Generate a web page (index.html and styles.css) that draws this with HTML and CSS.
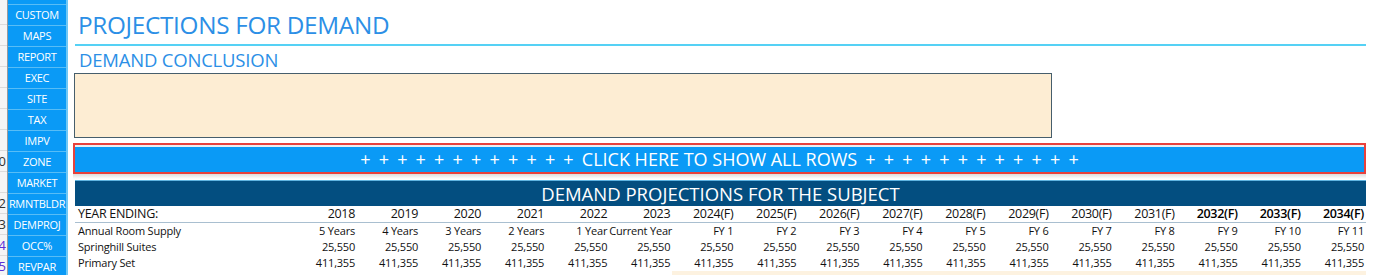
FILE: index.html
```html
<!DOCTYPE html>
<html lang="en">
<head>
    <meta charset="UTF-8">
    <title>Projections for Demand</title>
    <link rel="stylesheet" href="styles.css">
</head>
<body>
    <div class="page">
        <!-- sheet edge on the left -->
        <div class="gutter">
            <div class="cell"></div>
            <div class="cell"></div>
            <div class="cell"></div>
            <div class="cell"></div>
            <div class="cell"></div>
            <div class="cell"></div>
            <div class="cell"></div>
            <div class="cell dark">0</div>
            <div class="cell"></div>
            <div class="cell dark">2</div>
            <div class="cell dark">3</div>
            <div class="cell purple">4</div>
            <div class="cell purple">5</div>
        </div>

        <!-- nav buttons -->
        <nav class="sidebar">
            <a class="btn stub" href="javascript:;"></a>
            <a class="btn" href="javascript:;">CUSTOM</a>
            <a class="btn" href="javascript:;">MAPS</a>
            <a class="btn" href="javascript:;">REPORT</a>
            <a class="btn" href="javascript:;">EXEC</a>
            <a class="btn" href="javascript:;">SITE</a>
            <a class="btn" href="javascript:;">TAX</a>
            <a class="btn" href="javascript:;">IMPV</a>
            <a class="btn" href="javascript:;">ZONE</a>
            <a class="btn" href="javascript:;">MARKET</a>
            <a class="btn" href="javascript:;">RMNTBLDR</a>
            <a class="btn" href="javascript:;">DEMPROJ</a>
            <a class="btn" href="javascript:;">OCC%</a>
            <a class="btn" href="javascript:;">REVPAR</a>
        </nav>

        <main class="content">
            <h1 class="title">PROJECTIONS FOR DEMAND</h1>
            <h2 class="subtitle">DEMAND CONCLUSION</h2>
            <div class="conclusion"></div>

            <div class="show-rows">
                <a class="show-btn" href="javascript:;"><span class="plus">+ + + + + + + + + + + + </span>CLICK HERE TO SHOW ALL ROWS<span class="plus"> + + + + + + + + + + + +</span></a>
            </div>

            <div class="proj-head">DEMAND PROJECTIONS FOR THE SUBJECT</div>
            <table class="proj">
                <thead>
                    <tr>
                        <th class="label">YEAR ENDING:</th>
                        <th>2018</th><th>2019</th><th>2020</th><th>2021</th><th>2022</th><th>2023</th>
                        <th>2024(F)</th><th>2025(F)</th><th>2026(F)</th><th>2027(F)</th><th>2028(F)</th>
                        <th>2029(F)</th><th>2030(F)</th><th>2031(F)</th>
                        <th class="strong">2032(F)</th><th class="strong">2033(F)</th><th class="strong">2034(F)</th>
                    </tr>
                </thead>
                <tbody>
                    <tr>
                        <td class="label">Annual Room Supply</td>
                        <td>5 Years</td><td>4 Years</td><td>3 Years</td><td>2 Years</td><td>1 Year</td><td>Current Year</td>
                        <td>FY 1</td><td>FY 2</td><td>FY 3</td><td>FY 4</td><td>FY 5</td><td>FY 6</td>
                        <td>FY 7</td><td>FY 8</td><td>FY 9</td><td>FY 10</td><td>FY 11</td>
                    </tr>
                    <tr>
                        <td class="label">Springhill Suites</td>
                        <td>25,550</td><td>25,550</td><td>25,550</td><td>25,550</td><td>25,550</td><td>25,550</td>
                        <td>25,550</td><td>25,550</td><td>25,550</td><td>25,550</td><td>25,550</td><td>25,550</td>
                        <td>25,550</td><td>25,550</td><td>25,550</td><td>25,550</td><td>25,550</td>
                    </tr>
                    <tr>
                        <td class="label">Primary Set</td>
                        <td>411,355</td><td>411,355</td><td>411,355</td><td>411,355</td><td>411,355</td><td>411,355</td>
                        <td>411,355</td><td>411,355</td><td>411,355</td><td>411,355</td><td>411,355</td><td>411,355</td>
                        <td>411,355</td><td>411,355</td><td>411,355</td><td>411,355</td><td>411,355</td>
                    </tr>
                    <tr class="peach">
                        <td class="label"></td>
                        <td></td><td></td><td></td><td></td><td></td><td></td>
                        <td class="fill"></td><td class="fill"></td><td class="fill"></td><td class="fill"></td><td class="fill"></td><td class="fill"></td>
                        <td class="fill"></td><td class="fill"></td><td class="fill"></td><td class="fill"></td><td class="fill"></td>
                    </tr>
                </tbody>
            </table>
        </main>
    </div>
</body>
</html>
```

FILE: styles.css
```css
*{
    margin: 0;
    padding: 0;
    box-sizing: border-box;
}
body{
    background-color: #fff;
    font-family: "Open Sans", "Noto Sans", sans-serif;
    overflow: hidden;
}
.page{
    display: flex;
    height: 275px;
    overflow: hidden;
}

/* left sheet edge */
.gutter{
    width: 8px;
    flex-shrink: 0;
    background-color: #f5f5f5;
    border-right: 1px solid #9a9a9a;
    overflow: hidden;
    padding-top: 4px;
}
.gutter .cell{
    height: 21px;
    border-bottom: 1px solid #dcdcdc;
    font-size: 13px;
    line-height: 20px;
    text-align: right;
    direction: rtl;
    padding-right: 1px;
    color: #333;
}
.gutter .purple{
    color: #5a2fd6;
}

/* nav */
.sidebar{
    width: 60px;
    flex-shrink: 0;
    background-color: #0a9af6;
    border-right: 2px solid #6fc8f6;
    display: flex;
    flex-direction: column;
}
.btn{
    display: block;
    height: 21px;
    border-top: 1px solid #58bdf6;
    color: #fff;
    font-size: 11px;
    line-height: 20px;
    text-align: center;
    text-decoration: none;
    white-space: nowrap;
    letter-spacing: -0.3px;
    flex-shrink: 0;
}
.btn.stub{
    height: 4px;
    border-top: none;
}

/* main area */
.content{
    flex: 1;
    padding: 0 8px 0 5px;
    min-width: 0;
}
.title{
    height: 46px;
    padding: 9px 0 0 3px;
    font-size: 24.3px;
    font-weight: 400;
    line-height: 32px;
    color: #2c8fe6;
    letter-spacing: -0.3px;
    border-bottom: 2px solid #55d1f5;
    margin-left: 2px;
}
.subtitle{
    height: 27px;
    padding: 2px 0 0 6px;
    font-size: 18.5px;
    font-weight: 400;
    line-height: 23px;
    color: #2c8fe6;
    letter-spacing: -0.2px;
}
.conclusion{
    width: 978px;
    height: 65px;
    margin-left: 1px;
    background-color: #fdedd3;
    border: 1px solid #465e6c;
}

.show-rows{
    margin-top: 5px;
    height: 36px;
    padding-bottom: 4px;
    background: linear-gradient(#fff 26px, #d6d6d6 30px, #fff 36px);
}
.show-btn{
    display: block;
    height: 31px;
    border: 2px solid #e8413c;
    background-color: #0a9af6;
    box-shadow: inset 0 2px 0 #e9eef2;
    color: #fff;
    text-decoration: none;
    text-align: center;
    font-size: 18px;
    line-height: 28px;
    white-space: nowrap;
}
.show-btn .plus{
    word-spacing: 3.5px;
}

.proj-head{
    margin: 1px 0 0 2px;
    height: 26px;
    background-color: #034e80;
    border-top: 1px solid #5fb3e0;
    color: #fff;
    text-align: center;
    font-size: 18.5px;
    line-height: 25px;
}
.proj{
    margin-left: 2px;
    width: calc(100% - 2px);
    border-collapse: collapse;
    table-layout: fixed;
    font-size: 11px;
    color: #111;
}
.proj th, .proj td{
    text-align: right;
    white-space: nowrap;
    font-weight: 400;
    padding: 0 2px 0 0;
}
.proj th{
    height: 16px;
    font-size: 12.5px;
    line-height: 15px;
    border-bottom: 1px solid #a9bfd0;
    letter-spacing: -0.3px;
}
.proj th.strong{
    font-weight: 600;
    color: #000;
}
.proj td{
    height: 16px;
    line-height: 16px;
    letter-spacing: -0.2px;
}
.proj .label{
    width: 219px;
    text-align: left;
    padding-left: 3px;
}
.proj .peach td{
    height: 10px;
}
.proj .peach .fill{
    background-color: #fdf2e0;
}
```
